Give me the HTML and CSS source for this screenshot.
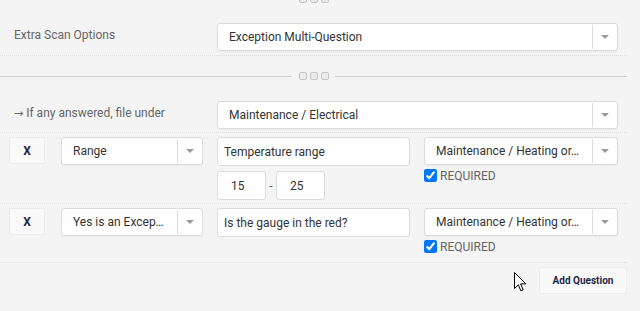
FILE: index.html
```html
<!DOCTYPE html>
<html>
<head>
<meta charset="utf-8">
<link rel="stylesheet" href="styles.css">
</head>
<body>
<div class="page">
  <div class="handle handle-top"><span></span><span></span><span></span></div>

  <div class="section first">
    <div class="opt-row">
      <div class="label">Extra Scan Options</div>
      <div class="select wide"><span class="val">Exception Multi-Question</span><span class="caret"></span></div>
    </div>
  </div>

  <div class="separator">
    <div class="line"></div>
    <div class="handle"><span></span><span></span><span></span></div>
    <div class="line"></div>
  </div>

  <div class="section second">
    <div class="opt-row">
      <div class="label"><span class="arrow">→</span> If any answered, file under</div>
      <div class="select wide"><span class="val">Maintenance / Electrical</span><span class="caret"></span></div>
    </div>
  </div>

  <div class="section q-row">
    <div class="x-btn">X</div>
    <div class="select type"><span class="val">Range</span><span class="caret"></span></div>
    <div class="q-col">
      <div class="input text">Temperature range</div>
      <div class="range">
        <div class="input num">15</div>
        <span class="dash">-</span>
        <div class="input num">25</div>
      </div>
    </div>
    <div class="r-col">
      <div class="select cat"><span class="val">Maintenance / Heating or…</span><span class="caret"></span></div>
      <label class="req"><input type="checkbox" checked><span>REQUIRED</span></label>
    </div>
  </div>

  <div class="section q-row">
    <div class="x-btn">X</div>
    <div class="select type"><span class="val">Yes is an Excep…</span><span class="caret"></span></div>
    <div class="q-col">
      <div class="input text">Is the gauge in the red?</div>
    </div>
    <div class="r-col">
      <div class="select cat"><span class="val">Maintenance / Heating or…</span><span class="caret"></span></div>
      <label class="req"><input type="checkbox" checked><span>REQUIRED</span></label>
    </div>
  </div>

  <div class="actions">
    <button class="add-btn">Add Question</button>
  </div>

  <svg class="cursor" width="13" height="20" viewBox="0 0 13 20">
    <path d="M0.5 0.5 L0.5 16.5 L4.3 12.8 L6.9 18.9 L9.2 17.9 L6.6 11.9 L11.8 11.9 Z" fill="#fff" stroke="#000" stroke-width="1" stroke-linejoin="round"/>
  </svg>
</div>
</body>
</html>
```
FILE: styles.css
```css
* { box-sizing: border-box; }
html, body { margin: 0; padding: 0; }
body {
  background: #f4f4f4;
  font-family: Roboto, "Liberation Sans", Arial, sans-serif;
  font-size: 12px;
  color: #333;
  width: 640px;
  height: 311px;
  overflow: hidden;
}
.page {
  position: relative;
  width: 627px;
  height: 311px;
}
.handle {
  display: flex;
  gap: 3px;
}
.handle span {
  display: block;
  width: 8px;
  height: 8px;
  border: 1px solid #c4c4c4;
  background: #ececec;
  border-radius: 2px;
}
.handle-top {
  height: 3px;
  overflow: hidden;
  justify-content: center;
  align-items: flex-end;
}
.section {
  border-bottom: 1px dotted #dedede;
}
.first {
  padding-top: 20px;
  padding-bottom: 4px;
}
.second {
  padding-top: 0;
  padding-bottom: 3px;
}
.opt-row {
  display: flex;
  align-items: center;
  padding: 0 9px 0 14px;
}
.opt-row .label {
  width: 203px;
  color: #666;
  margin-top: -5px;
  white-space: nowrap;
}
.arrow {
  font-family: "DejaVu Sans", sans-serif;
  font-size: 11px;
}
.separator {
  display: flex;
  align-items: center;
  margin: 16px 0 21px;
  height: 8px;
}
.separator .line {
  flex: 1;
  height: 1px;
  background: #cfcfcf;
}
.separator .handle { margin: 0 6px 0 7px; }

.select {
  display: flex;
  align-items: center;
  height: 28px;
  background: #fff;
  border: 1px solid #dcdcdc;
  border-radius: 3px;
  box-shadow: 0 1px 1px rgba(0,0,0,0.04);
}
.select .val {
  flex: 1;
  padding-left: 11px;
  white-space: nowrap;
  overflow: hidden;
}
.select .caret {
  position: relative;
  width: 25px;
  height: 24px;
  border-left: 1px solid #dcdcdc;
  flex: none;
}
.select .caret::after {
  content: "";
  position: absolute;
  left: 8px;
  top: 10px;
  border-left: 4px solid transparent;
  border-right: 4px solid transparent;
  border-top: 4px solid #9a9a9a;
}
.select.wide { width: 401px; }
.select.type { width: 142px; }
.select.type .val { padding-left: 11px; }
.select.cat { width: 194px; }

.q-row {
  display: flex;
  align-items: flex-start;
  padding: 4px 9px 3px 9px;
}
.x-btn {
  width: 36px;
  height: 27px;
  display: flex;
  align-items: center;
  justify-content: center;
  background: #f9f9f9;
  border: 1px solid #ebebeb;
  border-radius: 2px;
  font-weight: 700;
  color: #1b2746;
  margin-right: 16px;
}
.q-row .select.type { margin-right: 14px; }
.q-col {
  width: 193px;
  margin-right: 14px;
  display: flex;
  flex-direction: column;
  gap: 5px;
}
.input {
  height: 29px;
  background: #fff;
  border: 1px solid #dcdcdc;
  border-radius: 3px;
  display: flex;
  align-items: center;
  padding-left: 6px;
  white-space: nowrap;
  overflow: hidden;
}
.range {
  display: flex;
  align-items: center;
}
.input.num {
  width: 49px;
  padding-left: 13px;
}
.dash {
  width: 10px;
  text-align: center;
  color: #555;
}
.r-col {
  width: 194px;
  display: flex;
  flex-direction: column;
  padding-bottom: 6px;
}
.req {
  display: flex;
  align-items: center;
  margin-top: 4px;
  height: 13px;
  color: #666;
}
.req input {
  margin: 0 3px 0 0;
  width: 13px;
  height: 13px;
}
.actions {
  display: flex;
  justify-content: flex-end;
  padding-top: 4px;
}
.add-btn {
  width: 88px;
  height: 27px;
  background: #f9f9f9;
  border: 1px solid #ececec;
  border-radius: 2px;
  font-family: Roboto, "Liberation Sans", Arial, sans-serif;
  font-weight: 700;
  font-size: 10px;
  color: #1b2746;
  padding: 0;
}
.cursor {
  position: absolute;
  left: 514px;
  top: 272px;
}
```
